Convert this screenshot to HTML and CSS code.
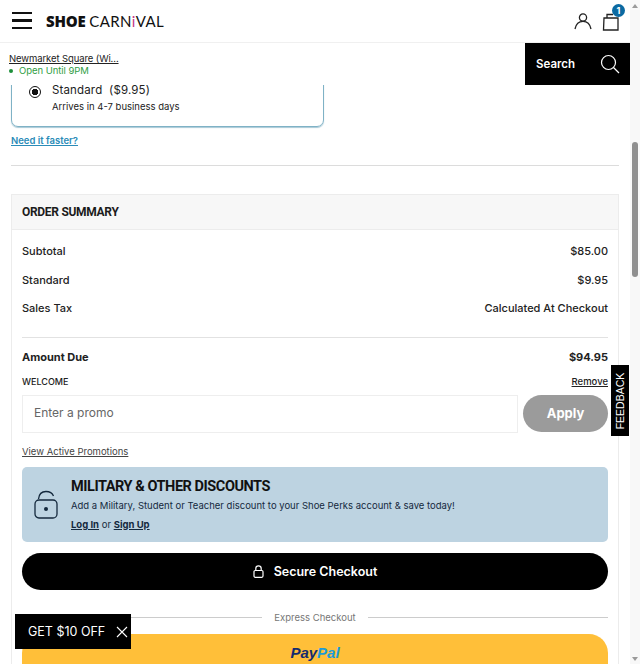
FILE: index.html
```html
<!DOCTYPE html>
<html lang="en">
<head>
<meta charset="utf-8">
<title>Checkout</title>
<link rel="stylesheet" href="styles.css">
</head>
<body>
<div class="app">
  <div class="page">
    <header class="topbar">
      <div class="burger"><span></span><span></span><span></span></div>
      <div class="logo"><b>SHOE</b> <span>CARN<i>i</i>VAL</span></div>
      <div class="top-icons">
        <svg class="user" width="20" height="20" viewBox="0 0 20 20" fill="none" stroke="#222" stroke-width="1.3"><circle cx="10" cy="6.5" r="3.6"/><path d="M2 18c1-5 4-7.6 8-7.6s7 2.600 8 7.600"/></svg>
        <div class="bag">
          <svg width="18" height="20" viewBox="0 0 18 20" fill="none" stroke="#222" stroke-width="1.300"><path d="M2 7h14v12H1.500z"/><path d="M5 7V3.500h6"/></svg>
          <span class="badge">1</span>
        </div>
      </div>
    </header>
    <div class="storebar">
      <div class="store">
        <a class="store-name">Newmarket Square (Wi...</a>
        <div class="store-open"><span class="dot"></span>Open Until 9PM</div>
      </div>
      <div class="searchbtn">
        <span>Search</span>
        <svg width="20" height="20" viewBox="0 0 20 20" fill="none" stroke="#fff" stroke-width="1.200"><circle cx="8.500" cy="8.500" r="7"/><path d="M13.500 13.500l5.500 5.500"/></svg>
      </div>
    </div>
    <main class="main">
      <div class="shipcard">
        <div class="radio"></div>
        <div class="shiptext">
          <div class="ship-soon">As soon as <b>Sat, Oct 04</b></div>
          <div class="ship-name">Standard&nbsp; ($9.95)</div>
          <div class="ship-days">Arrives in 4-7 business days</div>
        </div>
      </div>
      <a class="faster">Need it faster?</a>
      <hr class="rule">
      <section class="summary">
        <h2 class="sum-head">ORDER SUMMARY</h2>
        <div class="sum-body">
          <div class="row"><span>Subtotal</span><span>$85.00</span></div>
          <div class="row"><span>Standard</span><span>$9.95</span></div>
          <div class="row"><span>Sales Tax</span><span>Calculated At Checkout</span></div>
          <hr class="rule inner">
          <div class="row due"><span>Amount Due</span><span>$94.95</span></div>
          <div class="promo-top"><span class="welcome">WELCOME</span><a class="remove">Remove</a></div>
          <div class="promo-form">
            <div class="promo-input">Enter a promo</div>
            <div class="apply">Apply</div>
          </div>
          <a class="active-promos">View Active Promotions</a>
          <div class="military">
            <svg class="mil-icon" width="24" height="30" viewBox="0 0 24 30" fill="none" stroke="#14293d" stroke-width="1.300"><rect x="1" y="10" width="22" height="18" rx="4"/><path d="M4.500 9C5 4 8 1.500 12 1.500S18.500 3.500 19.500 6"/><circle cx="12" cy="19" r="2" fill="#14293d" stroke="none"/></svg>
            <div>
              <h3 class="mil-title">MILITARY &amp; OTHER DISCOUNTS</h3>
              <p class="mil-text">Add a Military, Student or Teacher discount to your Shoe Perks account &amp; save today!</p>
              <p class="mil-links"><a>Log In</a> or <a>Sign Up</a></p>
            </div>
          </div>
          <div class="checkout">
            <svg width="11" height="13" viewBox="0 0 11 13" fill="none" stroke="#fff" stroke-width="1.200"><rect x="1" y="5.500" width="9" height="6.800" rx="1.200"/><path d="M2.800 5.500V3.500a2.700 2.700 0 0 1 5.400 0v2"/></svg>
            <span>Secure Checkout</span>
          </div>
          <div class="express"><span>Express Checkout</span></div>
          <div class="paypal"><b class="pay">Pay</b><b class="pal">Pal</b></div>
        </div>
      </section>
    </main>
    <div class="feedback"><span>FEEDBACK</span></div>
    <div class="getoff"><span>GET $10 OFF</span>
      <svg width="12" height="12" viewBox="0 0 12 12" fill="none" stroke="#fff" stroke-width="1.100"><path d="M1 1l10 10M11 1L1 11"/></svg>
    </div>
  </div>
  <div class="scrollbar">
    <div class="arrow up"></div>
    <div class="track"><div class="thumb"></div></div>
    <div class="arrow down"></div>
  </div>
</div>
</body>
</html>
```

FILE: styles.css
```css
* { box-sizing: border-box; }
html, body { margin: 0; height: 664px; overflow: hidden; background: #fff; }
body { font-family: Inter, "Open Sans", sans-serif; color: #222; font-size: 11px; }
a { color: inherit; text-decoration: underline; }
h2, h3, p { margin: 0; }

.app { display: flex; height: 664px; }
.page { position: relative; width: 630px; height: 664px; display: flex; flex-direction: column; overflow: hidden; }

.topbar { height: 43px; flex: none; display: flex; align-items: center; padding: 0 9px 1px 12px; border-bottom: 1px solid #f0f0f0; background: #fff; }
.burger { width: 20px; display: flex; flex-direction: column; gap: 5px; }
.burger span { height: 2.500px; background: #111; display: block; }
.logo { margin-left: 14px; font-size: 15px; color: #111; white-space: nowrap; font-family: "Open Sans", sans-serif; letter-spacing: -0.200px; }
.logo b { font-weight: 800; }
.logo span { font-family: Lato, sans-serif; font-weight: 400; letter-spacing: 0.400px; }
.logo i { font-style: normal; color: #c4378a; }
.top-icons { margin-left: auto; display: flex; align-items: center; gap: 9px; }
.bag { position: relative; width: 18px; height: 20px; margin-right: 1px; }
.bag svg { display: block; }
.badge { position: absolute; top: -7px; right: -5px; width: 13px; height: 13px; border-radius: 50%; background: #0b6aa2; color: #fff; font-size: 9px; font-weight: 700; line-height: 13px; text-align: center; }

.storebar { height: 42px; flex: none; display: flex; justify-content: space-between; background: #fff; position: relative; z-index: 1; }
.store { padding: 9px 0 0 9px; }
.store-name { display: block; font-size: 9.500px; line-height: 13px; letter-spacing: -0.100px; color: #222; }
.store-open { display: flex; align-items: center; font-size: 9.500px; line-height: 12px; color: #2f9e44; letter-spacing: -0.050px; }
.dot { width: 4px; height: 4px; border-radius: 50%; background: #1d8f3a; margin-right: 6px; }
.searchbtn { width: 105px; background: #000; color: #fff; display: flex; align-items: center; justify-content: space-between; padding: 0 10px 0 11px; font-size: 11.500px; font-weight: 600; }

.main { flex: 1; padding: 0 11px; min-height: 0; }
.shipcard { width: 313px; height: 67px; margin-top: -25px; border: 1px solid #7fb2c6; border-radius: 7px; display: flex; align-items: flex-start; padding: 0 0 0 17px; box-shadow: 0 1px 1px #a9c9d6; }
.radio { width: 12px; height: 12px; border: 1.500px solid #111; border-radius: 50%; margin-top: 25px; background: radial-gradient(circle, #111 0 3px, #fff 3.500px); flex: none; }
.shiptext { margin-left: 11px; padding-top: 9px; }
.ship-soon { font-size: 10px; line-height: 14px; }
.ship-name { font-size: 11.500px; line-height: 13px; letter-spacing: 0.150px; }
.ship-days { font-size: 9.500px; line-height: 13px; margin-top: 3px; }
.faster { display: block; margin-top: 8px; font-size: 9.500px; line-height: 12px; font-weight: 600; color: #2b8cb8; }
.rule { border: 0; border-top: 1px solid #dcdcdc; margin: 18px 0 0; }
.summary { margin-top: 28px; border: 1px solid #ececec; border-bottom: 0; }
.sum-head { height: 35px; background: #f7f7f7; border-bottom: 1px solid #ececec; padding: 0 10px; font-family: Roboto, sans-serif; font-size: 12px; font-weight: 700; line-height: 34px; letter-spacing: -0.300px; color: #1c1c1c; }
.sum-body { padding: 7px 10px 0; }
.row { display: flex; justify-content: space-between; height: 28.500px; align-items: center; font-size: 11px; font-weight: 500; }
.rule.inner { margin: 0; margin-top: 14px; border-color: #e2e2e2; }
.due { margin-top: 5px; font-weight: 700; }
.promo-top { display: flex; justify-content: space-between; align-items: center; margin-top: 2px; height: 17px; }
.welcome { font-size: 9px; font-weight: 500; }
.remove { font-size: 9.500px; font-weight: 500; }
.promo-form { display: flex; justify-content: space-between; margin-top: 5px; }
.promo-input { width: 496px; height: 38px; border: 1px solid #eee; padding: 0 11px; line-height: 34px; font-size: 12px; color: #666; }
.apply { width: 85px; height: 37px; border-radius: 19px; background: #9b9b9b; color: #fff; text-align: center; line-height: 37px; font-size: 13px; font-weight: 700; }
.active-promos { display: block; margin-top: 12px; font-size: 9.500px; line-height: 13px; color: #444; }
.military { margin-top: 9px; height: 75px; background: #bdd3e1; border-radius: 5px; display: flex; align-items: center; padding: 0 0 0 12px; gap: 13px; color: #14293d; }
.mil-title { font-family: Roboto, sans-serif; font-size: 14.500px; font-weight: 700; letter-spacing: -0.450px; line-height: 17px; color: #111; }
.mil-text { font-size: 9.500px; line-height: 14px; margin-top: 4px; }
.mil-links { font-size: 9.500px; line-height: 14px; margin-top: 5px; }
.mil-links a { font-weight: 700; }
.checkout { margin-top: 11px; height: 37px; background: #000; border-radius: 19px; color: #fff; display: flex; align-items: center; justify-content: center; gap: 10px; font-size: 12.500px; font-weight: 600; }
.express { margin-top: 19px; height: 17px; display: flex; align-items: center; gap: 12px; font-size: 9.500px; color: #777; }
.express::before, .express::after { content: ""; flex: 1; border-top: 1px solid #ccc; }
.paypal { margin-top: 8px; height: 40px; background: #ffbf39; border-radius: 19px 19px 0 0; text-align: center; padding-top: 9px; font: italic 700 15px/19px "Liberation Sans", sans-serif; }
.pay { color: #142c6e; }
.pal { color: #1d9bd8; }

.feedback { position: absolute; left: 611px; top: 365px; width: 18px; height: 71px; background: #000; color: #fff; display: flex; align-items: center; justify-content: center; }
.feedback span { transform: rotate(-90deg); font-family: "Liberation Sans", sans-serif; font-size: 10.500px; white-space: nowrap; display: block; }
.getoff { position: absolute; left: 15px; top: 614px; width: 116px; height: 35px; background: #000; color: #fff; display: flex; align-items: center; gap: 11px; padding-left: 13px; font-size: 12.500px; white-space: nowrap; }

.scrollbar { width: 10px; background: #f8f8f8; display: flex; flex-direction: column; align-items: center; }
.arrow { flex: none; width: 0; height: 0; border-left: 3.500px solid transparent; border-right: 3.500px solid transparent; }
.arrow.up { margin-top: 4px; border-bottom: 4px solid #9a9a9a; }
.arrow.down { margin-bottom: 3px; border-top: 4px solid #9a9a9a; }
.track { flex: 1; width: 100%; padding-top: 134px; display: flex; justify-content: center; }
.thumb { width: 6px; height: 135px; background: #8f8f8f; border-radius: 3px; }
```
